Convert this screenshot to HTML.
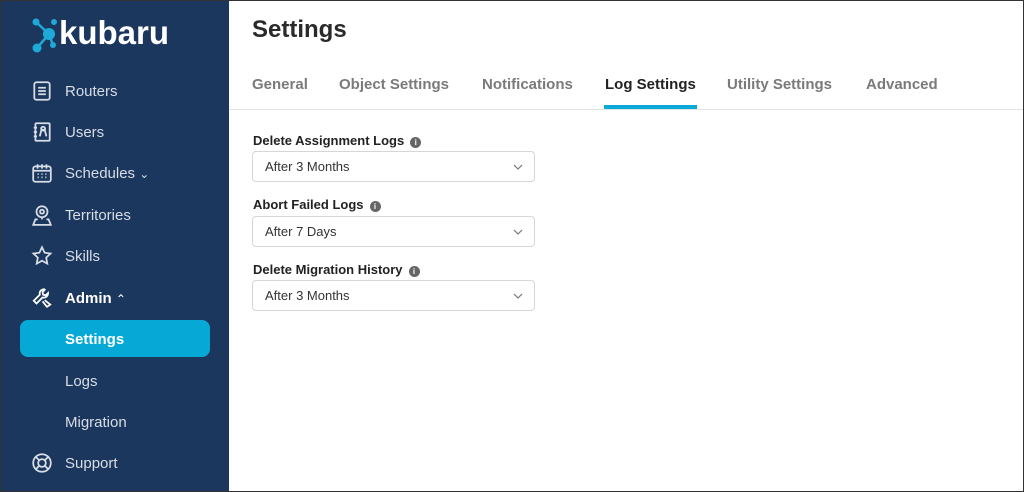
<!DOCTYPE html>
<html><head><style>
*{margin:0;padding:0;box-sizing:border-box}
body{width:1024px;height:492px;overflow:hidden;font-family:"Liberation Sans",sans-serif;background:#fff;position:relative}
.frame{position:absolute;inset:0;border:1px solid #333;z-index:10;pointer-events:none}
.sb{position:absolute;left:0;top:0;width:229px;height:492px;background:#1b375e}
.logo{position:absolute;left:32px;top:18px}
.logo span{position:absolute;left:27px;top:-4px;color:#fff;font-weight:bold;font-size:33px;letter-spacing:0px}
.it{position:absolute;left:65px;color:#d8dde6;font-size:15px}
.ic{position:absolute;left:31px;width:22px;height:22px}
.act{position:absolute;left:20px;top:320px;width:190px;height:37px;background:#06a9d6;border-radius:8px}
.main h1{position:absolute;left:252px;top:16px;font-size:24px;font-weight:bold;color:#2a2a2a}
.tab{position:absolute;top:76px;font-size:15px;font-weight:bold;color:#7a7a7a}
.line{position:absolute;left:229px;top:109px;width:795px;height:1px;background:#e3e3e3}
.ul{position:absolute;left:604px;top:105px;width:93px;height:4px;background:#0aa9d8}
.lbl{position:absolute;left:253px;font-size:13px;font-weight:bold;color:#222}
.lbl i{display:inline-block;width:11px;height:11px;border-radius:50%;background:#666;margin-left:6px;vertical-align:0px;color:#fff;font-size:8px;font-style:normal;text-align:center;line-height:11px}
.sel{position:absolute;left:252px;width:283px;height:31px;border:1px solid #d6d6d6;border-radius:4px;font-size:13px;color:#333;padding:7px 12px}
.sel svg{position:absolute;right:11px;top:12px}
</style></head><body>
<div class="sb">
<div class="logo">
<svg width="28" height="36" viewBox="0 0 28 36"><g fill="#1ea9d8"><circle cx="4" cy="4" r="3.5"/><circle cx="22" cy="4" r="3"/><circle cx="17" cy="16" r="6"/><circle cx="21" cy="27" r="3"/><circle cx="5" cy="30" r="4.5"/></g><g stroke="#1ea9d8" stroke-width="2.5"><line x1="4" y1="4" x2="17" y2="16"/><line x1="17" y1="16" x2="5" y2="30"/><line x1="17" y1="16" x2="21" y2="27"/></g></svg>
<span>kubaru</span></div>
<svg class="ic" style="top:80px" viewBox="0 0 20 20" fill="none" stroke="#d8dde6" stroke-width="1.6"><rect x="3" y="2" width="14" height="16" rx="2"/><path d="M6.5 7h7M6.5 10h7M6.5 13h7"/></svg>
<div class="it" style="top:83px">Routers</div>
<svg class="ic" style="top:121px" viewBox="0 0 20 20" fill="none" stroke="#d8dde6" stroke-width="1.6"><rect x="4" y="2" width="13" height="16" rx="1"/><path d="M2.5 6h3M2.5 10h3M2.5 14h3M8 14l1.5-6h3l1.5 6"/><circle cx="11" cy="7" r="1.8"/></svg>
<div class="it" style="top:124px">Users</div>
<svg class="ic" style="top:162px" viewBox="0 0 20 20" fill="none" stroke="#d8dde6" stroke-width="1.6"><rect x="2" y="4" width="16" height="14" rx="2"/><path d="M2 8h16M6 2v4M10 2v4M14 2v4M6 11h1M9.5 11h1M13 11h1M6 14h1M9.5 14h1M13 14h1"/></svg>
<div class="it" style="top:165px">Schedules <span style="font-size:12px">&#8964;</span></div>
<svg class="ic" style="top:204px" viewBox="0 0 20 20" fill="none" stroke="#d8dde6" stroke-width="1.6"><circle cx="10" cy="7" r="5"/><circle cx="10" cy="7" r="1.8"/><path d="M10 12v2M6 14H4l-2 5h16l-2-5h-2"/></svg>
<div class="it" style="top:207px">Territories</div>
<svg class="ic" style="top:245px" viewBox="0 0 20 20" fill="none" stroke="#d8dde6" stroke-width="1.6"><path d="M10 2l2.4 5 5.4.7-4 3.8 1 5.4L10 14.3 5.2 16.9l1-5.4-4-3.8 5.4-.7z"/></svg>
<div class="it" style="top:248px">Skills</div>
<svg class="ic" style="top:287px" viewBox="0 0 20 20" fill="none" stroke="#fff" stroke-width="1.6"><path d="M12 2a4 4 0 0 0-4 5L2.5 12.5l2.5 2.5L10.5 9.5a4 4 0 0 0 5-4l-2 2-2.5-.5-.5-2.5 2-2zM10.5 13l4 5 3-2-5-4"/></svg>
<div class="it" style="top:290px;color:#fff;font-weight:bold">Admin <span style="font-weight:normal;font-size:12px">&#8963;</span></div>
<div class="act"></div>
<div class="it" style="top:331px;color:#fff;font-weight:bold">Settings</div>
<div class="it" style="top:373px">Logs</div>
<div class="it" style="top:414px">Migration</div>
<svg class="ic" style="top:452px" viewBox="0 0 20 20" fill="none" stroke="#d8dde6" stroke-width="1.6"><circle cx="10" cy="10" r="8"/><circle cx="10" cy="10" r="3.5"/><path d="M4.5 4.5l3 3M15.5 4.5l-3 3M4.5 15.5l3-3M15.5 15.5l-3-3"/></svg>
<div class="it" style="top:455px">Support</div>
</div>
<div class="main">
<h1>Settings</h1>
<div class="tab" style="left:252px">General</div>
<div class="tab" style="left:339px">Object Settings</div>
<div class="tab" style="left:482px">Notifications</div>
<div class="tab" style="left:605px;color:#222">Log Settings</div>
<div class="tab" style="left:727px">Utility Settings</div>
<div class="tab" style="left:866px">Advanced</div>
<div class="line"></div><div class="ul"></div>
<div class="lbl" style="top:133px">Delete Assignment Logs<i>i</i></div>
<div class="sel" style="top:151px">After 3 Months<svg width="10" height="6" viewBox="0 0 10 6"><path d="M1 1l4 4 4-4" stroke="#777" fill="none" stroke-width="1.2"/></svg></div>
<div class="lbl" style="top:197px">Abort Failed Logs<i>i</i></div>
<div class="sel" style="top:216px">After 7 Days<svg width="10" height="6" viewBox="0 0 10 6"><path d="M1 1l4 4 4-4" stroke="#777" fill="none" stroke-width="1.2"/></svg></div>
<div class="lbl" style="top:262px">Delete Migration History<i>i</i></div>
<div class="sel" style="top:280px">After 3 Months<svg width="10" height="6" viewBox="0 0 10 6"><path d="M1 1l4 4 4-4" stroke="#777" fill="none" stroke-width="1.2"/></svg></div>
</div>
<div class="frame"></div>
</body></html>
